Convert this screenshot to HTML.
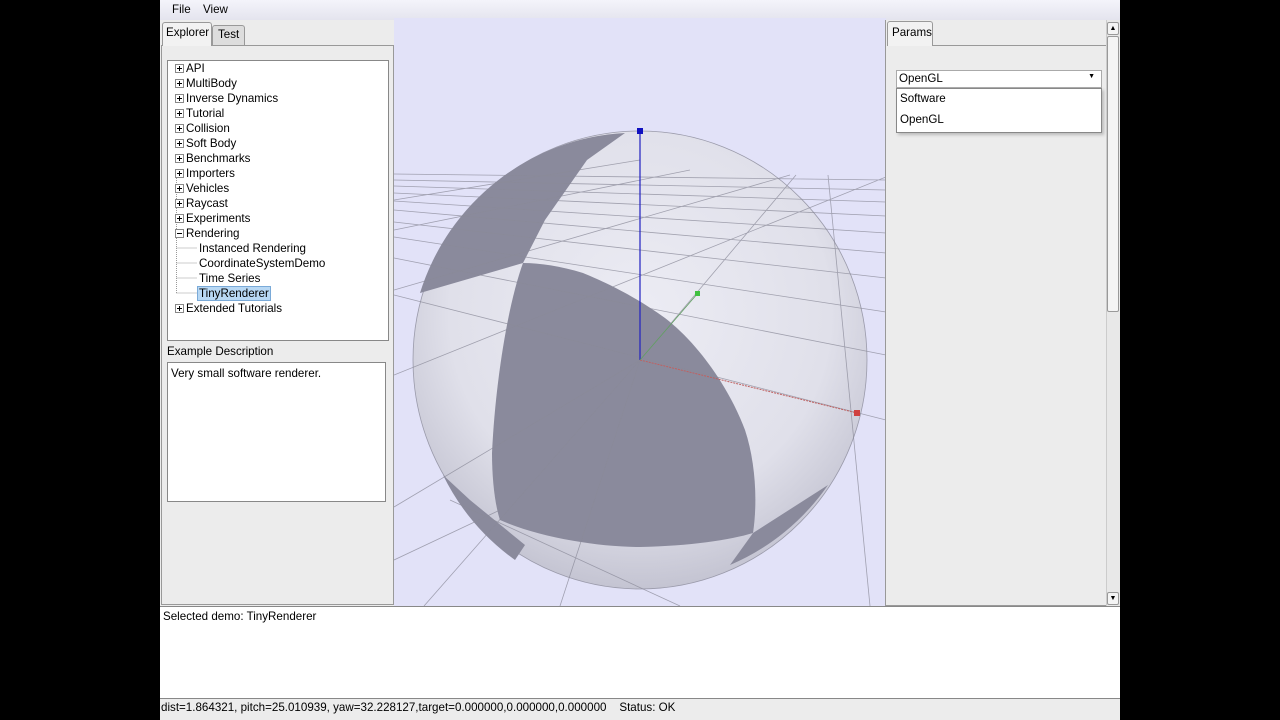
<!DOCTYPE html>
<html><head><meta charset="utf-8"><style>
*{margin:0;padding:0;box-sizing:border-box}
body{width:1280px;height:720px;background:#000;position:relative;overflow:hidden;font-family:"Liberation Sans",sans-serif;font-size:11.6px;color:#000}
.a{position:absolute}
.tree div{position:absolute;height:15px;line-height:15px;white-space:nowrap}
.pm{display:inline-block;width:9px;height:9px;border:1px solid #888;position:absolute;left:-11px;top:3px;background:#fff}
.pm:before{content:"";position:absolute;left:1px;top:3px;width:5px;height:1px;background:#000}
.pm.p:after{content:"";position:absolute;left:3px;top:1px;width:1px;height:5px;background:#000}
</style></head><body>
<div class="a" style="left:160px;top:0;width:960px;height:720px;background:#ececec"></div>
<div class="a" style="left:160px;top:0;width:960px;height:20px;background:linear-gradient(#f4f4fb,#e4e4ee)"></div>
<div class="a" style="left:172px;top:3px">File</div>
<div class="a" style="left:203px;top:3px">View</div>
<div class="a" style="left:161px;top:45px;width:233px;height:560px;border:1px solid #999;background:#ececec"></div>
<div class="a" style="left:162px;top:22px;width:50px;height:24px;background:#f2f2f2;border:1px solid #999;border-bottom:none;border-radius:3px 3px 0 0;padding:3px 0 0 3px">Explorer</div>
<div class="a" style="left:212px;top:25px;width:33px;height:20px;background:#ddd;border:1px solid #999;border-bottom:none;border-radius:3px 3px 0 0;padding:2px 0 0 5px">Test</div>
<div class="a" style="left:167px;top:60px;width:222px;height:281px;background:#fff;border:1px solid #888"></div>
<svg class="a" style="left:170px;top:172px" width="30" height="130"><path d="M6.5 0V121M6.5 76H27M6.5 91H27M6.5 106H27M6.5 121H27" stroke="#999" stroke-dasharray="1 1" fill="none"/></svg>
<div class="a tree" style="left:186px;top:61px">
<div style="top:0"><span class="pm p"></span>API</div>
<div style="top:15px"><span class="pm p"></span>MultiBody</div>
<div style="top:30px"><span class="pm p"></span>Inverse Dynamics</div>
<div style="top:45px"><span class="pm p"></span>Tutorial</div>
<div style="top:60px"><span class="pm p"></span>Collision</div>
<div style="top:75px"><span class="pm p"></span>Soft Body</div>
<div style="top:90px"><span class="pm p"></span>Benchmarks</div>
<div style="top:105px"><span class="pm p"></span>Importers</div>
<div style="top:120px"><span class="pm p"></span>Vehicles</div>
<div style="top:135px"><span class="pm p"></span>Raycast</div>
<div style="top:150px"><span class="pm p"></span>Experiments</div>
<div style="top:165px"><span class="pm"></span>Rendering</div>
<div style="top:180px;left:13px">Instanced Rendering</div>
<div style="top:195px;left:13px">CoordinateSystemDemo</div>
<div style="top:210px;left:13px">Time Series</div>
<div style="top:225px;left:11px;background:#b8d8f4;border:1px solid #7aaad8;padding:0 1px;line-height:13px">TinyRenderer</div>
<div style="top:240px"><span class="pm p"></span>Extended Tutorials</div>
</div>
<div class="a" style="left:167px;top:345px">Example Description</div>
<div class="a" style="left:167px;top:362px;width:219px;height:140px;background:#fff;border:1px solid #888;padding:4px 3px">Very small software renderer.</div>
<svg class="a" style="left:394px;top:18px" width="492" height="588" viewBox="394 18 492 588">
<defs><radialGradient id="g" cx="0.5" cy="0.4" r="0.6"><stop offset="0" stop-color="#ececf4"/><stop offset="0.7" stop-color="#e0e0ea"/><stop offset="1" stop-color="#c4c4d2"/></radialGradient></defs>
<rect x="394" y="18" width="492" height="588" fill="#e2e2f8"/>
<ellipse cx="640" cy="360" rx="227" ry="229" fill="url(#g)" stroke="#9a9aaa" stroke-width="0.8"/>
<path d="M625 133A227 229 0 0 0 420 293L523 263L545 220L587 160Z" fill="#8a8a9c"/>
<path d="M523 263C507 307 495 387 492 453C492 480 495 505 500 520C540 538 600 547 640 547C690 546 730 540 753 533C758 500 755 460 745 430C730 390 700 345 665 318C630 293 600 280 583 273C560 266 540 263 523 263Z" fill="#8a8a9c"/>
<path d="M753 533L828 485A227 229 0 0 1 730 565Z" fill="#8a8a9c"/>
<path d="M443 475A227 229 0 0 0 515 560L525 545L470 500Z" fill="#8a8a9c"/>
<g stroke="#8a8a98" stroke-width="0.8" fill="none" opacity=".75">
<path d="M394 174L886 180M394 180L886 190M394 186L886 202M394 193L886 216M394 201L886 233M394 210L886 253M394 222L886 278M394 237L886 312M394 258L886 355M394 295L886 420M394 200L640 160M394 230L690 170M394 290L790 175M394 375L886 177M394 507L640 360M394 560L500 510M424 606L640 360M450 500L680 606M640 360L796 175M640 360L560 606M828 175L870 606"/>
</g>
<path d="M640 131V360" stroke="#2020c0" stroke-width="1.2"/>
<path d="M640 360L857 413" stroke="#c06060" stroke-width="1" stroke-dasharray="2 1"/>
<path d="M640 360L698 293" stroke="#60a060" stroke-width="0.8"/>
<rect x="637" y="128" width="6" height="6" fill="#1010c0"/>
<rect x="695" y="291" width="5" height="5" fill="#40c040"/>
<rect x="854" y="410" width="6" height="6" fill="#d04040"/>
</svg>
<div class="a" style="left:885px;top:20px;width:222px;height:586px;border:1px solid #999;background:#ececec;border-top:none"></div>
<div class="a" style="left:932px;top:45px;width:174px;height:1px;background:#999"></div>
<div class="a" style="left:887px;top:21px;width:46px;height:25px;background:#f2f2f2;border:1px solid #999;border-bottom:none;border-radius:3px 3px 0 0;padding:4px 0 0 4px">Params</div>
<div class="a" style="left:896px;top:70px;width:206px;height:18px;background:#fff;border:1px solid #aaa;padding:1px 0 0 2px">OpenGL<span style="position:absolute;right:6px;top:2px;font-size:7px">▼</span></div>
<div class="a" style="left:896px;top:88px;width:206px;height:45px;background:#fff;border:1px solid #888;box-shadow:2px 2px 3px #bbb"><div style="padding:3px 0 0 3px">Software</div><div style="padding:8px 0 0 3px">OpenGL</div></div>
<div class="a" style="left:1106px;top:20px;width:14px;height:586px;background:#e8e8e8;border-left:1px solid #ccc"></div>
<div class="a" style="left:1107px;top:22px;width:12px;height:13px;background:#f4f4f4;border:1px solid #999;border-radius:2px;font-size:7px;text-align:center;line-height:11px">▲</div>
<div class="a" style="left:1107px;top:36px;width:12px;height:276px;background:#f4f4f4;border:1px solid #999;border-radius:2px"></div>
<div class="a" style="left:1107px;top:592px;width:12px;height:13px;background:#f4f4f4;border:1px solid #999;border-radius:2px;font-size:7px;text-align:center;line-height:11px">▼</div>
<div class="a" style="left:160px;top:606px;width:960px;height:93px;background:#fff;border-top:1px solid #888;border-bottom:1px solid #888;padding:3px 3px">Selected demo: TinyRenderer</div>
<div class="a" style="left:161px;top:701px;white-space:nowrap">dist=1.864321, pitch=25.010939, yaw=32.228127,target=0.000000,0.000000,0.000000&nbsp;&nbsp;&nbsp;&nbsp;Status: OK</div>
</body></html>
